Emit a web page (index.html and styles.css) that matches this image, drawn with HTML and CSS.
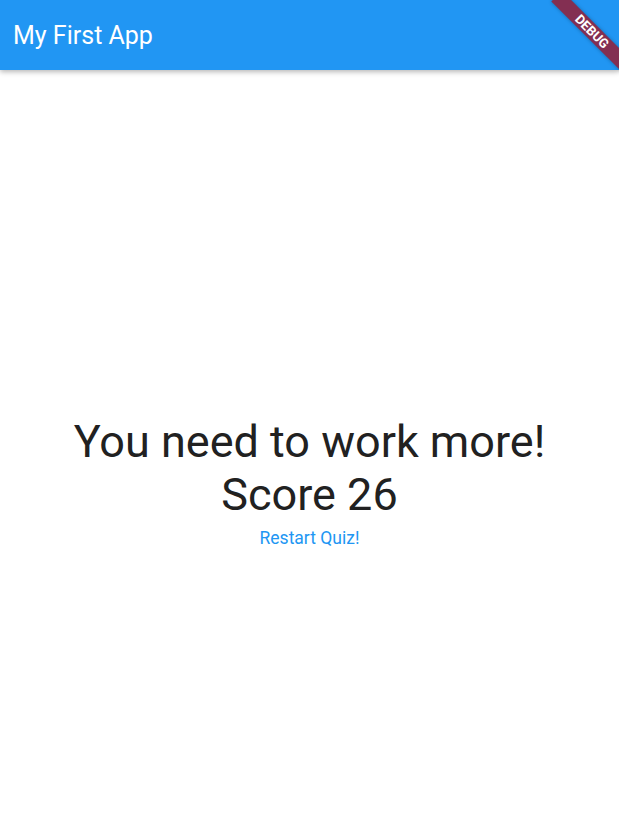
FILE: index.html
```html
<!DOCTYPE html>
<html>
<head>
<meta charset="utf-8">
<link rel="stylesheet" href="styles.css">
</head>
<body>
<header class="appbar">
  <h1 class="title">My First App</h1>
</header>
<main class="body">
  <div class="result">
    <p class="message">You need to work more!<br>Score 26</p>
    <button class="restart">Restart Quiz!</button>
  </div>
</main>
<div class="banner"><span>DEBUG</span></div>
</body>
</html>
```
FILE: styles.css
```css
html, body {
  margin: 0;
  padding: 0;
  width: 619px;
  height: 818px;
  overflow: hidden;
  background: #ffffff;
  font-family: Roboto, "Noto Sans", sans-serif;
}
.appbar {
  height: 70px;
  background: #2196f3;
  display: flex;
  align-items: center;
  padding-left: 13px;
  box-shadow: 0 2px 5px rgba(0,0,0,0.28);
  position: relative;
  z-index: 1;
}
.title {
  margin: 0;
  color: #ffffff;
  font-weight: 400;
  font-size: 25px;
}
.body {
  display: flex;
  justify-content: center;
  padding-top: 346px;
}
.result {
  display: flex;
  flex-direction: column;
  align-items: center;
}
.message {
  margin: 0;
  text-align: center;
  font-size: 45px;
  line-height: 52.7px;
  color: #212121;
}
.restart {
  margin-top: 7px;
  background: none;
  border: none;
  padding: 0;
  font-family: Roboto, "Noto Sans", sans-serif;
  font-size: 17.5px;
  font-weight: 400;
  line-height: 20.5px;
  color: #2196f3;
}
.banner {
  position: absolute;
  top: 0;
  right: 0;
  width: 80px;
  height: 80px;
  overflow: hidden;
  z-index: 2;
}
.banner span {
  position: absolute;
  top: 23.5px;
  right: -23px;
  width: 100px;
  height: 15px;
  line-height: 15px;
  background: #832f52;
  color: #fff;
  font-size: 13px;
  font-weight: 700;
  text-align: center;
  transform: rotate(45deg);
  box-shadow: 0 0 4px rgba(0,0,0,0.3);
}
```
